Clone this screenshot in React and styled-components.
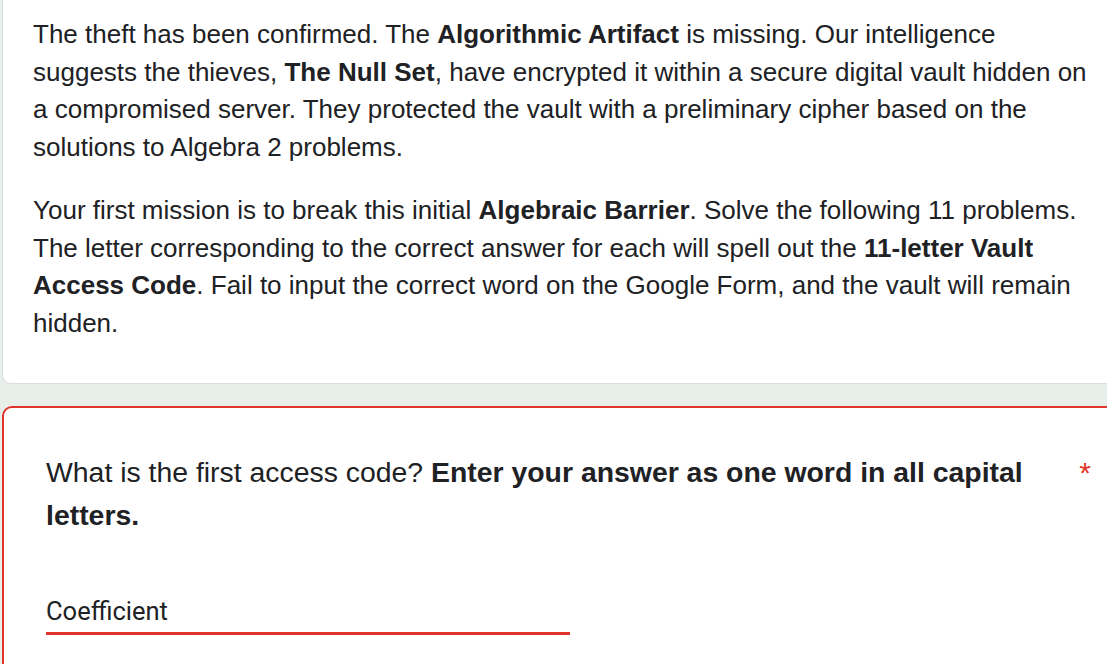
import React from 'react';
import styled, { createGlobalStyle } from 'styled-components';

const GlobalStyle = createGlobalStyle`
  html, body {
    margin: 0;
    padding: 0;
    background: #e8efe8;
    overflow: hidden;
  }
`;

const Page = styled.div`
  display: flex;
  flex-direction: column;
  gap: 22px;
  padding-left: 2px;
  width: 1140px;
`;

const Card = styled.section`
  background: #fff;
  border: 1px solid ${p => (p.$error ? '#e0352a' : '#dadce0')};
  border-width: ${p => (p.$error ? '2px' : '0 1px 1px 1px')};
  border-radius: ${p => (p.$error ? '10px' : '0 0 9px 9px')};
  box-sizing: border-box;
  padding: ${p => p.$pad};
`;

const Para = styled.p`
  margin: 0 0 26px;
  font-family: 'Liberation Sans', Arial, sans-serif;
  font-size: 26px;
  line-height: 37.5px;
  color: #202124;
  white-space: nowrap;
  &:last-child { margin-bottom: 0; }
  b { font-weight: 700; }
`;

const QuestionRow = styled.div`
  display: flex;
  align-items: flex-start;
  justify-content: space-between;
  width: 1045px;
`;

const QuestionText = styled.div`
  font-family: 'Liberation Sans', Arial, sans-serif;
  font-size: 28.4px;
  line-height: 43px;
  color: #202124;
  white-space: nowrap;
  b { font-weight: 700; }
`;

const Required = styled.span`
  color: #e0352a;
  font-family: 'Liberation Sans', Arial, sans-serif;
  font-size: 30px;
  line-height: 43px;
`;

const AnswerField = styled.div`
  margin-top: 59px;
  width: 524px;
  border-bottom: 3px solid #e0352a;
  padding-bottom: 6px;
  font-family: Roboto, 'Noto Sans', sans-serif;
  font-size: 25.5px;
  line-height: 30px;
  color: #202124;
`;

export default function App() {
  return (
    <>
      <GlobalStyle />
      <Page>
        <Card $pad="16px 30px 41px 30px">
          <Para>
            The theft has been confirmed. The <b>Algorithmic Artifact</b> is missing. Our intelligence<br />
            suggests the thieves, <b>The Null Set</b>, have encrypted it within a secure digital vault hidden on<br />
            a compromised server. They protected the vault with a preliminary cipher based on the<br />
            solutions to Algebra 2 problems.
          </Para>
          <Para>
            Your first mission is to break this initial <b>Algebraic Barrier</b>. Solve the following 11 problems.<br />
            The letter corresponding to the correct answer for each will spell out the <b>11-letter Vault</b><br />
            <b>Access Code</b>. Fail to input the correct word on the Google Form, and the vault will remain<br />
            hidden.
          </Para>
        </Card>
        <Card $error $pad="43px 42px 40px 42px">
          <QuestionRow>
            <QuestionText>
              What is the first access code? <b>Enter your answer as one word in all capital</b><br />
              <b>letters.</b>
            </QuestionText>
            <Required>*</Required>
          </QuestionRow>
          <AnswerField>Coefficient</AnswerField>
        </Card>
      </Page>
    </>
  );
}
